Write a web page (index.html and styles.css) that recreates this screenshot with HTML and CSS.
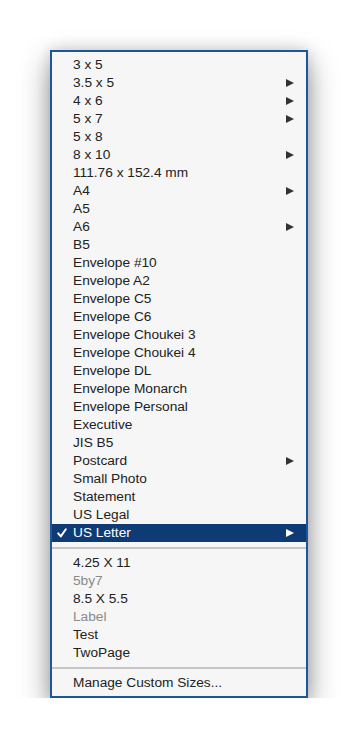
FILE: index.html
```html
<!DOCTYPE html>
<html>
<head>
<meta charset="utf-8">
<link rel="stylesheet" href="styles.css">
</head>
<body>
<div class="menu">
  <div class="item">3 x 5</div>
  <div class="item sub">3.5 x 5</div>
  <div class="item sub">4 x 6</div>
  <div class="item sub">5 x 7</div>
  <div class="item">5 x 8</div>
  <div class="item sub">8 x 10</div>
  <div class="item">111.76 x 152.4 mm</div>
  <div class="item sub">A4</div>
  <div class="item">A5</div>
  <div class="item sub">A6</div>
  <div class="item">B5</div>
  <div class="item">Envelope #10</div>
  <div class="item">Envelope A2</div>
  <div class="item">Envelope C5</div>
  <div class="item">Envelope C6</div>
  <div class="item">Envelope Choukei 3</div>
  <div class="item">Envelope Choukei 4</div>
  <div class="item">Envelope DL</div>
  <div class="item">Envelope Monarch</div>
  <div class="item">Envelope Personal</div>
  <div class="item">Executive</div>
  <div class="item">JIS B5</div>
  <div class="item sub">Postcard</div>
  <div class="item">Small Photo</div>
  <div class="item">Statement</div>
  <div class="item">US Legal</div>
  <div class="item sub selected"><svg class="check" width="10" height="10" viewBox="0 0 10 10"><path d="M1.2 5.4 L3.8 8.4 L8.8 1.2" fill="none" stroke="#ffffff" stroke-width="2" stroke-linecap="round" stroke-linejoin="round"/></svg>US Letter</div>
  <div class="sep"></div>
  <div class="item">4.25 X 11</div>
  <div class="item disabled">5by7</div>
  <div class="item">8.5 X 5.5</div>
  <div class="item disabled">Label</div>
  <div class="item">Test</div>
  <div class="item">TwoPage</div>
  <div class="sep"></div>
  <div class="item">Manage Custom Sizes...</div>
</div>
</body>
</html>
```
FILE: styles.css
```css
html, body {
  margin: 0;
  background: #ffffff;
}
body {
  padding: 50px 0 0 50px;
  font-family: "Liberation Sans", Arial, sans-serif;
  font-size: 13.7px;
  color: #222222;
}
.menu {
  width: 254px;
  border: 2px solid #1a579d;
  background: #f6f6f6;
  padding: 4px 0;
  box-shadow: 0 12px 28px rgba(0, 0, 0, 0.4), 0 0 14px rgba(0, 0, 0, 0.14);
}
.item {
  position: relative;
  height: 18px;
  line-height: 18px;
  padding-left: 21px;
  white-space: nowrap;
}
.item.sub::after {
  content: "";
  position: absolute;
  left: 234px;
  top: 5px;
  width: 0;
  height: 0;
  border-top: 4.5px solid transparent;
  border-bottom: 4.5px solid transparent;
  border-left: 8px solid #333333;
}
.item.disabled {
  color: #8a8a8a;
}
.item.selected {
  background: #0e3b75;
  color: #ffffff;
}
.item.selected::after {
  border-left-color: #ffffff;
}
.check {
  position: absolute;
  left: 5px;
  top: 4px;
}
.sep {
  height: 12px;
  display: flex;
  align-items: center;
}
.sep::before {
  content: "";
  flex: 1;
  height: 2px;
  background: #c6c6c6;
}
```
